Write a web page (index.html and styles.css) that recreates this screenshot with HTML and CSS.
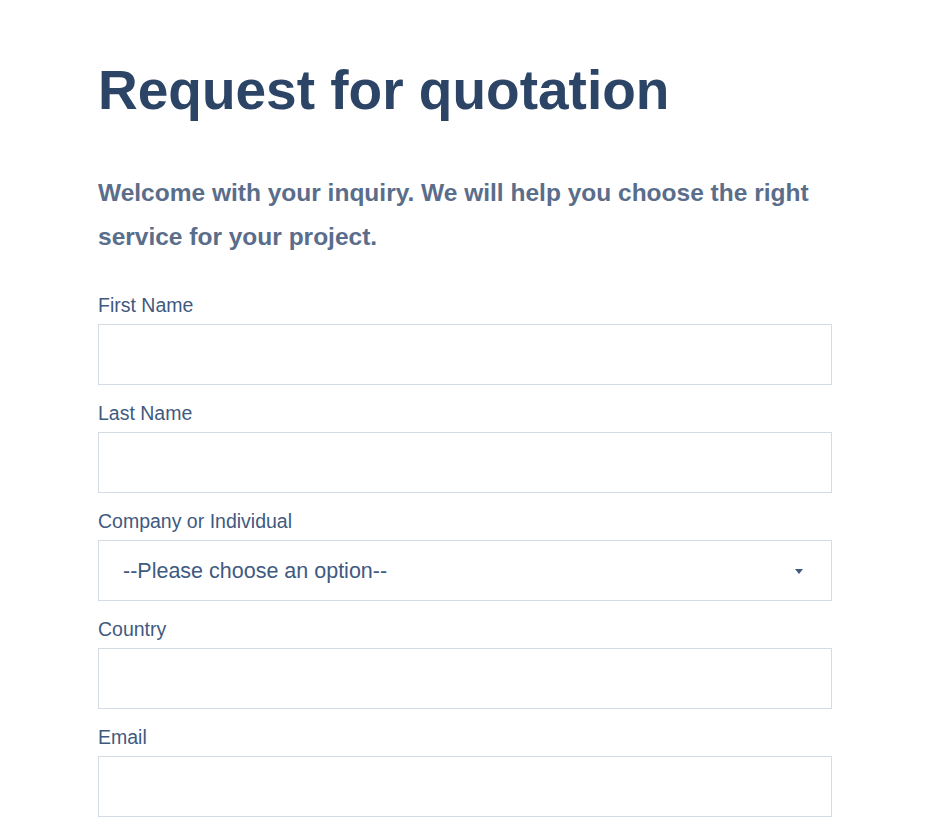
FILE: index.html
```html
<!DOCTYPE html>
<html lang="en">

<head>
    <meta charset="UTF-8">
    <meta name="viewport" content="width=device-width, initial-scale=1.0">
    <title>Request for quotation</title>
    <link rel="stylesheet" href="styles.css">
</head>

<body>
    <div class="container">
        <h1>Request for quotation</h1>
        <p class="intro">Welcome with your inquiry. We will help you choose the right service for your project.</p>

        <form class="quote-form">
            <div class="field">
                <label for="first-name">First Name</label>
                <input type="text" id="first-name">
            </div>
            <div class="field">
                <label for="last-name">Last Name</label>
                <input type="text" id="last-name">
            </div>
            <div class="field">
                <label for="client-type">Company or Individual</label>
                <div class="select-wrap">
                    <select id="client-type">
                        <option>--Please choose an option--</option>
                        <option>Company</option>
                        <option>Individual</option>
                    </select>
                    <span class="select-arrow"></span>
                </div>
            </div>
            <div class="field">
                <label for="country">Country</label>
                <input type="text" id="country">
            </div>
            <div class="field">
                <label for="email">Email</label>
                <input type="email" id="email">
            </div>
            <div class="field">
                <label for="phone">Phone</label>
                <input type="tel" id="phone">
            </div>
        </form>
    </div>
</body>

</html>
```

FILE: styles.css
```css
body {
    font-family: "Liberation Sans", Arial, Helvetica, sans-serif;
    margin: 0;
    padding: 0;
    background-color: #ffffff;
}

.container {
    width: 734px;
    padding: 57px 0 40px 98px;
}

h1 {
    margin: 0;
    font-size: 55px;
    line-height: 67px;
    font-weight: bold;
    color: #2c4566;
}

.intro {
    margin: 47px 0 34px;
    font-size: 24.5px;
    line-height: 44px;
    font-weight: bold;
    color: #5a6d8a;
}

.field {
    margin-bottom: 16px;
}

.field label {
    display: block;
    font-size: 19.5px;
    line-height: 24px;
    margin-bottom: 7px;
    color: #3f5a7f;
}

.field input,
.field select {
    display: block;
    box-sizing: border-box;
    width: 100%;
    height: 61px;
    margin: 0;
    padding: 0 24px;
    border: 1px solid #d5dbe2;
    border-radius: 0;
    background: #ffffff;
    font-family: inherit;
    font-size: 21.5px;
    color: #3f5a7f;
    outline: none;
}

.field select {
    appearance: none;
    -webkit-appearance: none;
}

.select-wrap {
    position: relative;
}

.select-arrow {
    position: absolute;
    right: 29px;
    top: 29px;
    width: 0;
    height: 0;
    border-left: 4px solid transparent;
    border-right: 4px solid transparent;
    border-top: 5px solid #3f5a7f;
    pointer-events: none;
}
```
